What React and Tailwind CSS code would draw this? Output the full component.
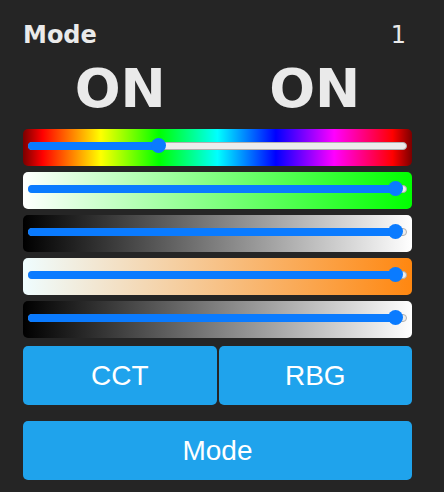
import React from "react";

const TRACK_TRAVEL = 360;

function Slider({ bg, frac }) {
  const left = frac * TRACK_TRAVEL;
  return (
    <div className={`h-[37px] rounded-[5px] px-[5px] pt-[13px] ${bg}`}>
      <div className="relative h-[8px]">
        <div className="absolute inset-0 rounded-full bg-[#ececec] border border-[#b0b0b0]" />
        <div
          className="absolute left-0 top-0 h-[8px] rounded-full bg-[#0a7bff]"
          style={{ width: left + 7.5 }}
        />
        <div
          className="absolute top-[-4px] h-[15px] w-[15px] rounded-full bg-[#0a7bff]"
          style={{ left }}
        />
      </div>
    </div>
  );
}

export default function App() {
  return (
    <div className="min-h-screen w-[444px] bg-[#252525] text-[#eaeaea] font-['DejaVu_Sans',sans-serif]">
      <div className="ml-[23px] w-[389px] pt-[21px]">
        <div className="flex justify-between pr-[6px] leading-[28px] text-[24px]">
          <span className="font-bold">Mode</span>
          <span>1</span>
        </div>
        <div className="mt-[13px] grid grid-cols-2 text-center text-[54px] font-bold leading-[54px]">
          <div>ON</div>
          <div>ON</div>
        </div>
        <div className="mt-[13px] flex flex-col gap-[6px]">
          <Slider
            bg="bg-[linear-gradient(to_right,#7a0000_0%,#ff0000_5%,#ffff00_20%,#00ff00_35%,#00ffff_50%,#0000ff_65%,#ff00ff_80%,#ff0000_95%,#7a0000_100%)]"
            frac={0.342}
          />
          <Slider bg="bg-[linear-gradient(to_right,#ffffff,#00ff00)]" frac={1} />
          <Slider bg="bg-[linear-gradient(to_right,#000000,#ffffff)]" frac={1} />
          <Slider bg="bg-[linear-gradient(to_right,#effdff,#ff8710)]" frac={1} />
          <Slider bg="bg-[linear-gradient(to_right,#000000,#ffffff)]" frac={1} />
        </div>
        <div className="mt-[8px] flex gap-[2px] font-['Liberation_Sans',Arial,sans-serif] text-[28px] text-white">
          <div className="flex h-[59px] flex-1 items-center justify-center rounded-[5px] bg-[#1fa3ec]">CCT</div>
          <div className="flex h-[59px] flex-1 items-center justify-center rounded-[5px] bg-[#1fa3ec]">RBG</div>
        </div>
        <div className="mt-[16px] flex h-[59px] items-center justify-center rounded-[5px] bg-[#1fa3ec] font-['Liberation_Sans',Arial,sans-serif] text-[28px] text-white">
          Mode
        </div>
      </div>
    </div>
  );
}
